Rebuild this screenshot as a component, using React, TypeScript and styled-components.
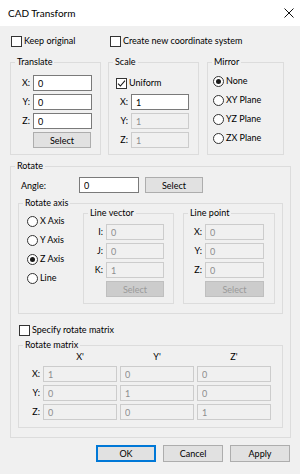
import React from 'react';
import styled, { createGlobalStyle } from 'styled-components';

const GlobalStyle = createGlobalStyle`
  html, body {
    margin: 0;
    padding: 0;
    background: #f0f0f0;
  }
  body {
    font-family: Lato, "Segoe UI", "Liberation Sans", sans-serif;
    font-size: 9px;
    color: #000;
  }
`;

const Window = styled.div`
  width: 300px;
  height: 474px;
  background: #f0f0f0;
  display: flex;
  flex-direction: column;
  overflow: hidden;
`;

const TitleBar = styled.div`
  height: 26px;
  flex: none;
  background: #ffffff;
  display: flex;
  align-items: center;
  justify-content: space-between;
  padding: 0 6px 0 8px;
  box-sizing: border-box;
`;

const Title = styled.span`
  font-size: 10px;
  line-height: 12px;
`;

const Body = styled.div`
  padding: 7px 10px 0 10px;
  display: flex;
  flex-direction: column;
`;

const CheckRow = styled.div<{ $mt?: number; $ml?: number }>`
  display: flex;
  align-items: center;
  height: 16px;
  margin-top: ${p => p.$mt || 0}px;
  padding-left: ${p => p.$ml || 0}px;
`;

const Choice = styled.label<{ $w?: number; $ml?: number }>`
  display: flex;
  align-items: center;
  gap: 2px;
  height: 16px;
  line-height: 16px;
  white-space: nowrap;
  margin-left: ${p => p.$ml || 0}px;
  width: ${p => (p.$w ? `${p.$w}px` : 'auto')};
  flex: none;
`;

const Box = styled.span`
  width: 11px;
  height: 11px;
  box-sizing: border-box;
  border: 1px solid #333333;
  background: #ffffff;
  display: flex;
  align-items: center;
  justify-content: center;
  flex: none;
`;

const Circle = styled.span`
  width: 11px;
  height: 11px;
  box-sizing: border-box;
  border: 1px solid #333333;
  border-radius: 50%;
  background: #ffffff;
  display: flex;
  align-items: center;
  justify-content: center;
  flex: none;
`;

const Dot = styled.span`
  width: 5px;
  height: 5px;
  border-radius: 50%;
  background: #1a1a1a;
`;

const GroupsRow = styled.div`
  display: flex;
  align-items: stretch;
  margin-top: 8px;
`;

const Group = styled.fieldset<{ $w: number; $mt?: number; $ml?: number }>`
  margin: ${p => p.$mt || 0}px 0 0 ${p => p.$ml || 0}px;
  padding: 0;
  min-width: 0;
  width: ${p => p.$w}px;
  box-sizing: border-box;
  border: 1px solid #dcdcdc;
  flex: none;
`;

const Legend = styled.legend`
  margin-left: 4px;
  padding: 0 2px;
  font-size: 9px;
  line-height: 10px;
`;

const GroupBody = styled.div<{ $pad: string }>`
  padding: ${p => p.$pad};
  display: flex;
  flex-direction: column;
  gap: 3px;
`;

const FieldRow = styled.div<{ $input: number }>`
  display: grid;
  grid-template-columns: 15px ${p => p.$input}px;
  column-gap: 3px;
  align-items: center;
  height: 16px;
`;

const FieldLabel = styled.span`
  text-align: right;
  line-height: 16px;
`;

const TextBox = styled.input`
  width: 100%;
  height: 16px;
  box-sizing: border-box;
  margin: 0;
  padding: 0 0 0 4px;
  border: 1px solid #7a7a7a;
  background: #ffffff;
  font-family: inherit;
  font-size: 9px;
  color: #000;
  outline: none;
  &:disabled {
    border-color: #cccccc;
    background: #f0f0f0;
    color: #8d8d8d;
  }
`;

const Button = styled.button<{ $w: number; $ml?: number }>`
  width: ${p => p.$w}px;
  height: 16px;
  margin: 0 0 0 ${p => p.$ml || 0}px;
  padding: 0;
  box-sizing: border-box;
  border: 1px solid #adadad;
  background: #e1e1e1;
  font-family: inherit;
  font-size: 9px;
  color: #000;
  flex: none;
  &:disabled {
    border-color: #bfbfbf;
    background: #cccccc;
    color: #9a9a9a;
  }
`;

const AngleRow = styled.div`
  display: flex;
  align-items: center;
  height: 16px;
  padding-left: 3px;
`;

const AngleLabel = styled.span`
  width: 58px;
  flex: none;
`;

const AngleInput = styled.div`
  width: 60px;
  flex: none;
  margin-right: 6px;
`;

const AxisBody = styled.div`
  display: flex;
  align-items: stretch;
  padding: 0 0 9px 8px;
`;

const RadioColumn = styled.div`
  width: 56px;
  flex: none;
  display: flex;
  flex-direction: column;
  gap: 3px;
  padding-top: 5px;
`;

const MatrixGrid = styled.div`
  display: grid;
  grid-template-columns: 15px 74px 74px 74px;
  grid-template-rows: 12px 16px 16px 16px;
  column-gap: 3px;
  row-gap: 3px;
  align-items: center;
  padding: 1px 0 7px 6px;
`;

const ColHead = styled.span`
  text-align: center;
  line-height: 12px;
`;

const Footer = styled.div`
  display: flex;
  justify-content: flex-end;
  gap: 7px;
  margin-top: 7px;
`;

const DialogButton = styled.button<{ $primary?: boolean }>`
  width: 60px;
  height: 17px;
  margin: 0;
  padding: 0;
  box-sizing: border-box;
  border: 1px solid ${p => (p.$primary ? '#0078d7' : '#adadad')};
  box-shadow: ${p => (p.$primary ? 'inset 0 0 0 1px #0078d7' : 'none')};
  background: #e1e1e1;
  font-family: inherit;
  font-size: 9px;
  color: #000;
`;

const Check = ({ checked }: { checked?: boolean }) => (
  <Box>
    {checked && (
      <svg width="9" height="9" viewBox="0 0 9 9">
        <path d="M1 4.6 L3.4 7 L8 1.6" fill="none" stroke="#1a1a1a" strokeWidth="1.1" />
      </svg>
    )}
  </Box>
);

const Radio = ({ on }: { on?: boolean }) => <Circle>{on && <Dot />}</Circle>;

const Field = ({ label, value, w, disabled }: { label: string; value: string; w: number; disabled?: boolean }) => (
  <FieldRow $input={w}>
    <FieldLabel>{label}</FieldLabel>
    <TextBox defaultValue={value} disabled={disabled} />
  </FieldRow>
);

const matrix = [
  ['X:', '1', '0', '0'],
  ['Y:', '0', '1', '0'],
  ['Z:', '0', '0', '1'],
];

const App = () => {
  return (
    <Window>
      <GlobalStyle />
      <TitleBar>
        <Title>CAD Transform</Title>
        <svg width="10" height="10" viewBox="0 0 10 10">
          <path d="M0.5 0.5 L9.5 9.5 M9.5 0.5 L0.5 9.5" stroke="#111" strokeWidth="1" />
        </svg>
      </TitleBar>

      <Body>
        <CheckRow $ml={1}>
          <Choice $w={99}>
            <Check />
            Keep original
          </Choice>
          <Choice>
            <Check />
            Create new coordinate system
          </Choice>
        </CheckRow>

        <GroupsRow>
          <Group $w={91}>
            <Legend>Translate</Legend>
            <GroupBody $pad="8px 0 6px 4px">
              <Field label="X:" value="0" w={59} />
              <Field label="Y:" value="0" w={59} />
              <Field label="Z:" value="0" w={59} />
              <Button $w={58} $ml={18}>Select</Button>
            </GroupBody>
          </Group>

          <Group $w={91} $ml={7}>
            <Legend>Scale</Legend>
            <GroupBody $pad="8px 0 6px 4px">
              <Choice $ml={3}>
                <Check checked />
                Uniform
              </Choice>
              <Field label="X:" value="1" w={58} />
              <Field label="Y:" value="1" w={58} disabled />
              <Field label="Z:" value="1" w={58} disabled />
            </GroupBody>
          </Group>

          <Group $w={77} $ml={8}>
            <Legend>Mirror</Legend>
            <GroupBody $pad="6px 0 0 5px">
              <Choice>
                <Radio on />
                None
              </Choice>
              <Choice>
                <Radio />
                XY Plane
              </Choice>
              <Choice>
                <Radio />
                YZ Plane
              </Choice>
              <Choice>
                <Radio />
                ZX Plane
              </Choice>
            </GroupBody>
          </Group>
        </GroupsRow>

        <Group $w={281} $mt={6}>
          <Legend>Rotate</Legend>
          <GroupBody $pad="6px 0 9px 7px" style={{ gap: 0 }}>
            <AngleRow>
              <AngleLabel>Angle:</AngleLabel>
              <AngleInput>
                <TextBox defaultValue="0" />
              </AngleInput>
              <Button $w={58}>Select</Button>
            </AngleRow>

            <Group $w={265} $mt={5}>
              <Legend>Rotate axis</Legend>
              <AxisBody>
                <RadioColumn>
                  <Choice>
                    <Radio />
                    X Axis
                  </Choice>
                  <Choice>
                    <Radio />
                    Y Axis
                  </Choice>
                  <Choice>
                    <Radio on />
                    Z Axis
                  </Choice>
                  <Choice>
                    <Radio />
                    Line
                  </Choice>
                </RadioColumn>

                <Group $w={91}>
                  <Legend>Line vector</Legend>
                  <GroupBody $pad="6px 0 6px 4px">
                    <Field label="I:" value="0" w={58} disabled />
                    <Field label="J:" value="0" w={58} disabled />
                    <Field label="K:" value="1" w={58} disabled />
                    <Button $w={58} $ml={18} disabled>Select</Button>
                  </GroupBody>
                </Group>

                <Group $w={92} $ml={9}>
                  <Legend>Line point</Legend>
                  <GroupBody $pad="6px 0 6px 3px">
                    <Field label="X:" value="0" w={59} disabled />
                    <Field label="Y:" value="0" w={59} disabled />
                    <Field label="Z:" value="0" w={59} disabled />
                    <Button $w={59} $ml={18} disabled>Select</Button>
                  </GroupBody>
                </Group>
              </AxisBody>
            </Group>

            <CheckRow $mt={8} $ml={1}>
              <Choice>
                <Check />
                Specify rotate matrix
              </Choice>
            </CheckRow>

            <Group $w={265} $mt={2}>
              <Legend>Rotate matrix</Legend>
              <MatrixGrid>
                <span />
                <ColHead>X'</ColHead>
                <ColHead>Y'</ColHead>
                <ColHead>Z'</ColHead>
                {matrix.map(row => (
                  <React.Fragment key={row[0]}>
                    <FieldLabel>{row[0]}</FieldLabel>
                    <TextBox defaultValue={row[1]} disabled />
                    <TextBox defaultValue={row[2]} disabled />
                    <TextBox defaultValue={row[3]} disabled />
                  </React.Fragment>
                ))}
              </MatrixGrid>
            </Group>
          </GroupBody>
        </Group>

        <Footer>
          <DialogButton $primary>OK</DialogButton>
          <DialogButton>Cancel</DialogButton>
          <DialogButton>Apply</DialogButton>
        </Footer>
      </Body>
    </Window>
  );
};

export default App;
